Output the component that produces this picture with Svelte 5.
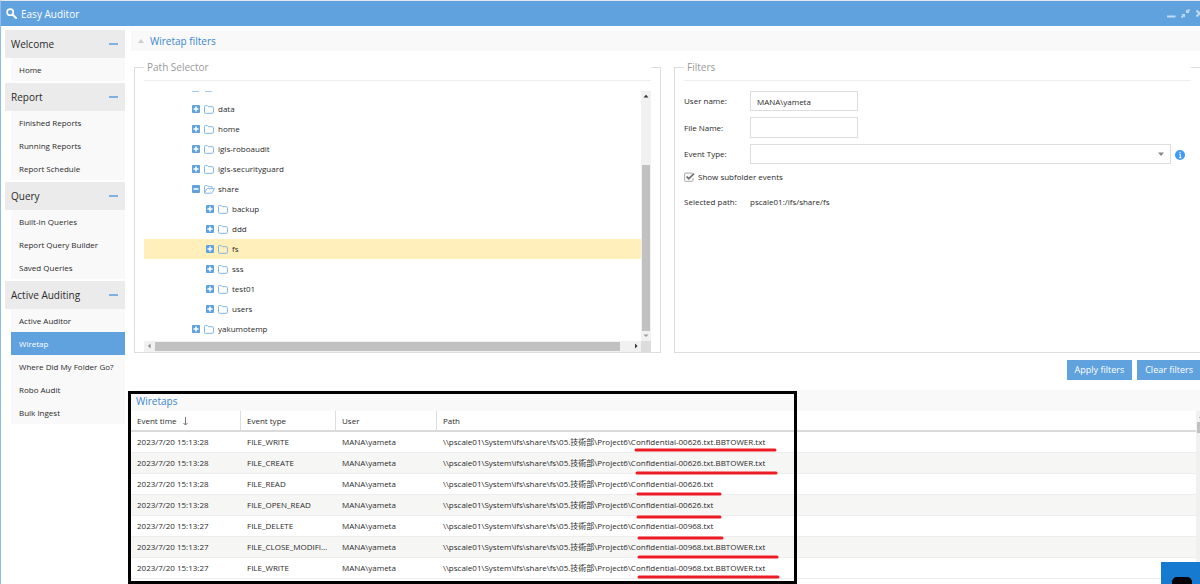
<script>
  const groups = [
    { title: 'Welcome', items: ['Home'] },
    { title: 'Report', items: ['Finished Reports', 'Running Reports', 'Report Schedule'] },
    { title: 'Query', items: ['Built-In Queries', 'Report Query Builder', 'Saved Queries'] },
    { title: 'Active Auditing', items: ['Active Auditor', 'Wiretap', 'Where Did My Folder Go?', 'Robo Audit', 'Bulk Ingest'] }
  ];

  const tree = [
    { name: 'data' },
    { name: 'home' },
    { name: 'igls-roboaudit' },
    { name: 'igls-securityguard' },
    { name: 'share', open: true },
    { name: 'backup', child: true },
    { name: 'ddd', child: true },
    { name: 'fs', child: true, selected: true },
    { name: 'sss', child: true },
    { name: 'test01', child: true },
    { name: 'users', child: true },
    { name: 'yakumotemp' }
  ];

  const base = '\\\\pscale01\\System\\ifs\\share\\fs\\05.技術部\\Project6\\';
  const rows = [
    ['2023/7/20 15:13:28', 'FILE_WRITE', 'Confidential-00626.txt.BBTOWER.txt'],
    ['2023/7/20 15:13:28', 'FILE_CREATE', 'Confidential-00626.txt.BBTOWER.txt'],
    ['2023/7/20 15:13:28', 'FILE_READ', 'Confidential-00626.txt'],
    ['2023/7/20 15:13:28', 'FILE_OPEN_READ', 'Confidential-00626.txt'],
    ['2023/7/20 15:13:27', 'FILE_DELETE', 'Confidential-00968.txt'],
    ['2023/7/20 15:13:27', 'FILE_CLOSE_MODIFIED', 'Confidential-00968.txt.BBTOWER.txt'],
    ['2023/7/20 15:13:27', 'FILE_WRITE', 'Confidential-00968.txt.BBTOWER.txt']
  ];

  // Hand-drawn red strokes under the file names: x start, x end, y
  const strokes = [
    [505, 644, 60],
    [506, 645, 83],
    [507, 589, 104],
    [507, 589, 127],
    [508, 591, 148],
    [508, 646, 167],
    [508, 647, 187]
  ];

  let user = $state('MANA\\yameta');
  let file = $state('');
  let subfolders = $state(true);
</script>

<div class="window">
  <header class="titlebar">
    <svg class="search" viewBox="0 0 11 11" aria-hidden="true">
      <circle cx="4.2" cy="4.2" r="3.1" fill="none" stroke="#fff" stroke-width="1.6" />
      <path d="M6.5 6.5 10 10" stroke="#fff" stroke-width="2" stroke-linecap="round" />
    </svg>
    <h1>Easy Auditor</h1>
    <div class="tools">
      <button aria-label="Minimize"><svg viewBox="0 0 9 9"><path d="M0 7.5h8.500" stroke="#c3dbf2" stroke-width="2" /></svg></button>
      <button aria-label="Restore"><svg viewBox="0 0 9 9"><path d="M5 0.500V4H8.500ZM0.500 5H4V8.500Z" fill="#c3dbf2" /><path d="M8.500 0.500 5.500 3.500M3.500 5.500 0.500 8.500" stroke="#c3dbf2" stroke-width="1.800" /></svg></button>
      <button aria-label="Close"><svg viewBox="0 0 9 9"><path d="M1.500 1.500 7.500 7.500M7.500 1.500 1.500 7.500" stroke="#c3dbf2" stroke-width="2" /></svg></button>
    </div>
  </header>

  <div class="body">
    <nav>
      {#each groups as g}
        <section class="group">
          <h2>{g.title}<span class="minus"></span></h2>
          <ul>
            {#each g.items as item}
              <li><a href="#top" class:active={item === 'Wiretap'}>{item}</a></li>
            {/each}
          </ul>
        </section>
      {/each}
    </nav>

    <main>
      <div class="bar filterbar">
        <svg width="6" height="4" viewBox="0 0 6 4" aria-hidden="true"><path d="M0 4 3 0 6 4Z" fill="#ccc" /></svg>
        <h2>Wiretap filters</h2>
      </div>

      <div class="panels">
        <fieldset>
          <legend>Path Selector</legend>
          <div class="viewport">
            <ul class="tree">
              <li class="clipped"><span></span><span></span></li>
              {#each tree as n}
                <li class:child={n.child} class:selected={n.selected}>
                  <svg class="toggle" viewBox="0 0 8 8" aria-hidden="true">
                    <rect width="8" height="8" rx="1" fill="#5fa2dd" />
                    <path d={n.open ? 'M1.500 4h5' : 'M1.500 4h5M4 1.500v5'} stroke="#fff" stroke-width="1.500" />
                  </svg>
                  {#if n.open}
                    <svg class="folder" viewBox="0 0 11 9" aria-hidden="true">
                      <path d="M0.500 7.800V1.300Q0.500 0.600 1.200 0.600H3.200L4.200 1.700H7.600Q8.300 1.700 8.300 2.400V3.600M0.500 7.800 2.700 4Q3 3.600 3.500 3.600H10.400L8.300 7.600Q8 8.200 7.400 8.200H1Q0.500 8.200 0.500 7.800Z" fill="none" stroke="#85b4e2" />
                    </svg>
                  {:else}
                    <svg class="folder" viewBox="0 0 11 9" aria-hidden="true">
                      <path d="M0.500 1.300Q0.500 0.600 1.200 0.600H3.300L4.400 1.700H8.600Q9.400 1.700 9.400 2.500V7.500Q9.400 8.300 8.600 8.300H1.300Q0.500 8.300 0.500 7.500Z" fill="none" stroke="#85b4e2" />
                    </svg>
                  {/if}
                  <span>{n.name}</span>
                </li>
              {/each}
            </ul>
            <div class="vscroll">
              <svg viewBox="0 0 10 10"><path d="M2.500 6.500 5 3.800 7.500 6.500Z" fill="#333" /></svg>
              <div class="thumb"></div>
              <svg viewBox="0 0 10 10"><path d="M2.500 3.500H7.500L5 6Z" fill="#999" /></svg>
            </div>
            <div class="hscroll">
              <svg viewBox="0 0 10 10"><path d="M6.500 2.500V7.500L4 5Z" fill="#888" /></svg>
              <div class="thumb"></div>
              <svg viewBox="0 0 10 10"><path d="M4 2.500V7.500L6.500 5Z" fill="#333" /></svg>
            </div>
            <div class="corner"></div>
          </div>
        </fieldset>

        <fieldset>
          <legend>Filters</legend>
          <form>
            <label for="user">User name:</label>
            <input id="user" type="text" bind:value={user} />
            <label for="file">File Name:</label>
            <input id="file" type="text" bind:value={file} />
            <label for="event">Event Type:</label>
            <div class="combo">
              <select id="event"><option value=""></option></select>
              <svg class="caret" viewBox="0 0 6 4" aria-hidden="true"><path d="M0 0.500H6L3 4Z" fill="#888" /></svg>
            </div>
            <svg class="info" viewBox="0 0 10 10" aria-hidden="true">
              <circle cx="5" cy="5" r="5" fill="#3f9cf5" />
              <path d="M4.200 4.200H5.300V7.600M4 7.700H6.500M4.400 2.400H5.700" stroke="#fff" fill="none" />
            </svg>
            <label class="check">
              <input type="checkbox" bind:checked={subfolders} />
              <svg viewBox="0 0 11 10" aria-hidden="true">
                <path d="M9 6V8.500Q9 9.300 8.200 9.300H1.500Q0.600 9.300 0.600 8.500V2Q0.600 1.100 1.500 1.100H8.500" fill="none" stroke="#a8a8a8" />
                {#if subfolders}<path d="M2.600 4.500 4.800 6.700 10 1.700" fill="none" stroke="#777" stroke-width="1.800" />{/if}
              </svg>
              Show subfolder events
            </label>
            <span>Selected path:</span>
            <output>pscale01:/ifs/share/fs</output>
          </form>
        </fieldset>
      </div>

      <div class="actions">
        <button>Apply filters</button>
        <button>Clear filters</button>
      </div>

      <section class="wiretaps">
        <div class="bar"><h2>Wiretaps</h2></div>
        <div class="grid">
          <table>
            <colgroup><col class="c-time" /><col class="c-type" /><col class="c-user" /><col /></colgroup>
            <thead>
              <tr>
                <th>Event time
                  <svg class="sort" viewBox="0 0 5 9" aria-hidden="true"><path d="M2.500 0V8M0.500 6 2.500 8 4.500 6" fill="none" stroke="#777" /></svg>
                </th>
                <th>Event type</th>
                <th>User</th>
                <th>Path</th>
              </tr>
            </thead>
            <tbody>
              {#each rows as [time, type, name]}
                <tr><td>{time}</td><td>{type}</td><td>MANA\yameta</td><td>{base}{name}</td></tr>
              {/each}
            </tbody>
          </table>
          <div class="gridscroll">
            <svg viewBox="0 0 10 10"><path d="M3 6.500 5 4 7 6.500Z" fill="#888" /></svg>
            <div class="thumb"></div>
          </div>
        </div>
        <div class="frame"></div>
        <svg class="strokes" aria-hidden="true">
          {#each strokes as [x1, x2, y]}
            <line {x1} {x2} y1={y} y2={y} />
          {/each}
        </svg>
      </section>
    </main>
  </div>

  <button class="chat" aria-label="Chat">
    <svg viewBox="0 0 20 14"><rect width="20" height="14" rx="5" fill="#000" /></svg>
  </button>
</div>

<style>
  :global(body) {
    overflow: hidden;
    background: #fff;
  }
  .window {
    box-sizing: border-box;
    position: relative;
    height: 100vh;
    overflow: hidden;
    border-left: 1px solid #8fbde8;
    border-top: 1px solid #e4eaf0;
    font-family: 'Open Sans', 'Noto Sans CJK JP', sans-serif;
    font-size: 8px;
    line-height: 12px;
    color: #2a2a2a;
  }
  h1, h2, ul, fieldset, legend {
    margin: 0;
    padding: 0;
    font-weight: 400;
  }
  ul { list-style: none; }
  svg { display: block; flex: none; }
  button, input, select {
    box-sizing: border-box;
    margin: 0;
    font: inherit;
    color: inherit;
    border-radius: 0;
  }

  .titlebar {
    display: flex;
    align-items: center;
    height: 25px;
    padding-left: 5px;
    margin-right: -4px;
    background: #5fa2dd;
    color: #fff;
  }
  .search { width: 11px; height: 11px; }
  h1 {
    margin-left: 4px;
    font-size: 10px;
    line-height: 16px;
  }
  .tools {
    display: flex;
    gap: 5px;
    margin-left: auto;
  }
  .tools button {
    padding: 0;
    border: 0;
    background: none;
  }
  .tools svg { width: 9px; height: 9px; }

  .body {
    display: flex;
    align-items: flex-start;
    gap: 6px;
    padding: 4px 0 0 4px;
    margin-right: -1px;
  }
  nav {
    flex: none;
    width: 120px;
  }
  .group { margin-bottom: 2px; }
  .group h2 {
    display: flex;
    align-items: center;
    justify-content: space-between;
    height: 28px;
    padding: 0 7px 0 6px;
    background: #ecebeb;
    font-size: 10px;
  }
  .minus {
    width: 9px;
    height: 2px;
    background: #7db3e3;
  }
  .group ul {
    margin-left: 6px;
    background: #f9f9f9;
  }
  .group a {
    display: block;
    padding: 5px 0 5px 8px;
    color: inherit;
    line-height: 13px;
    text-decoration: none;
    white-space: nowrap;
  }
  .group a.active {
    background: #5fa2dd;
    color: #fff;
  }

  main {
    flex: 1;
    min-width: 0;
  }
  .bar {
    display: flex;
    align-items: center;
    height: 21px;
    padding-left: 5px;
    background: #f9f9f9;
  }
  .bar h2 {
    font-size: 10px;
    line-height: 20px;
    color: #3a86cc;
  }
  .filterbar {
    gap: 6px;
    padding-left: 7px;
  }

  .panels {
    display: grid;
    grid-template-columns: 1fr 1fr;
    gap: 13px;
    padding: 3px 0 0 3px;
  }
  fieldset {
    min-width: 0;
    padding: 0 9px;
    border: 1px solid #ddd;
  }
  legend {
    box-sizing: border-box;
    width: 100%;
    padding: 5px 3px;
    border-bottom: 1px solid #eee;
    font-size: 10px;
    line-height: 16px;
    color: #999;
  }
  .viewport {
    display: grid;
    grid-template-columns: 1fr 10px;
    grid-template-rows: 1fr 11px;
    margin-top: 10px;
  }
  .tree { padding-bottom: 2px; }
  .tree li {
    display: flex;
    align-items: center;
    height: 20px;
    padding-left: 48px;
  }
  .tree li.child { padding-left: 62px; }
  .tree li.clipped {
    gap: 6px;
    height: 8px;
    align-items: flex-start;
  }
  .clipped span {
    width: 7px;
    height: 1px;
    background: #a5cae9;
  }
  .tree .selected { background: #ffefbb; }
  .toggle {
    width: 8px;
    height: 8px;
    margin-right: 4px;
  }
  .folder {
    width: 11px;
    height: 9px;
    margin-right: 3px;
  }
  .vscroll {
    display: flex;
    flex-direction: column;
    background: #f1f1f1;
  }
  .hscroll {
    display: flex;
    background: #f1f1f1;
  }
  .vscroll svg, .hscroll svg { width: 10px; height: 10px; }
  .thumb { background: #c1c1c1; }
  .vscroll .thumb {
    flex: 1;
    margin: 64px 1px 0;
  }
  .hscroll .thumb {
    flex: 1;
    margin: 1px 11px 1px 1px;
  }
  .corner { background: #dcdcdc; }

  form {
    display: grid;
    grid-template-columns: 66px 108px 1fr 20px;
    grid-template-rows: 20px 21px 20px 14px 24px;
    row-gap: 6px;
    align-items: center;
    margin-top: 10px;
  }
  form > label:not(.check), form > span { grid-column: 1; }
  input[type='text'] {
    grid-column: 2;
    height: 100%;
    padding: 0 6px;
    border: 1px solid #ddd;
    background: #fff;
  }
  .combo {
    grid-column: 2 / 4;
    position: relative;
    height: 20px;
  }
  select {
    width: 100%;
    height: 20px;
    border: 1px solid #ddd;
    background: #fff;
    appearance: none;
  }
  .caret {
    position: absolute;
    right: 7px;
    top: 8px;
    width: 6px;
    height: 4px;
    pointer-events: none;
  }
  .info {
    width: 10px;
    height: 10px;
    margin: 2px 0 0 4px;
  }
  .check {
    grid-column: 1 / 4;
    display: flex;
    align-items: center;
    gap: 3px;
  }
  .check input {
    position: absolute;
    opacity: 0;
  }
  .check svg { width: 11px; height: 10px; }
  output { grid-column: 2 / 4; }

  .actions {
    display: flex;
    justify-content: flex-end;
    gap: 5px;
    padding: 7px 0 10px;
    margin-right: -2px;
  }
  .actions button {
    height: 20px;
    padding: 0 8px;
    border: 0;
    background: #5fa2dd;
    color: #fff;
    font-size: 9px;
  }
  .actions button:last-child { padding-right: 10px; }

  .wiretaps { position: relative; }
  .grid { display: flex; }
  table {
    flex: 1;
    width: 100%;
    min-width: 0;
    table-layout: fixed;
    border-collapse: separate;
    border-spacing: 0;
  }
  .c-time { width: 110px; }
  .c-type { width: 95px; }
  .c-user { width: 101px; }
  th, td {
    box-sizing: border-box;
    height: 21px;
    padding: 0 6px;
    font-weight: 400;
    text-align: left;
    white-space: nowrap;
    overflow: hidden;
    text-overflow: ellipsis;
    border-bottom: 1px solid #ededed;
  }
  td:nth-child(2) { padding-right: 8px; }
  th {
    border-bottom: 2px solid #dadada;
    border-right: 1px solid #ddd;
  }
  th:last-child { border-right: 0; }
  tbody tr:nth-child(even) { background: #f6f6f5; }
  .sort {
    display: inline-block;
    width: 5px;
    height: 9px;
    margin-left: 4px;
    vertical-align: middle;
  }
  .gridscroll {
    flex: none;
    width: 5px;
    overflow: hidden;
    background: #f1f1f1;
  }
  .gridscroll svg { width: 10px; height: 11px; }
  .gridscroll .thumb {
    height: 11px;
    margin-left: 1px;
  }
  .frame {
    box-sizing: border-box;
    position: absolute;
    left: -3px;
    top: 1px;
    width: 669px;
    height: 193px;
    border: 3px solid #000;
  }
  .strokes {
    position: absolute;
    left: 0;
    top: 0;
    width: 660px;
    height: 192px;
  }
  .strokes line {
    stroke: #ed1c24;
    stroke-width: 3;
    stroke-linecap: round;
  }

  .chat {
    position: absolute;
    right: 0;
    bottom: 0;
    width: 39px;
    height: 22px;
    padding: 15px 0 0 11px;
    border: 0;
    overflow: hidden;
    background: #167bd0;
  }
  .chat svg { width: 20px; height: 14px; }
</style>
